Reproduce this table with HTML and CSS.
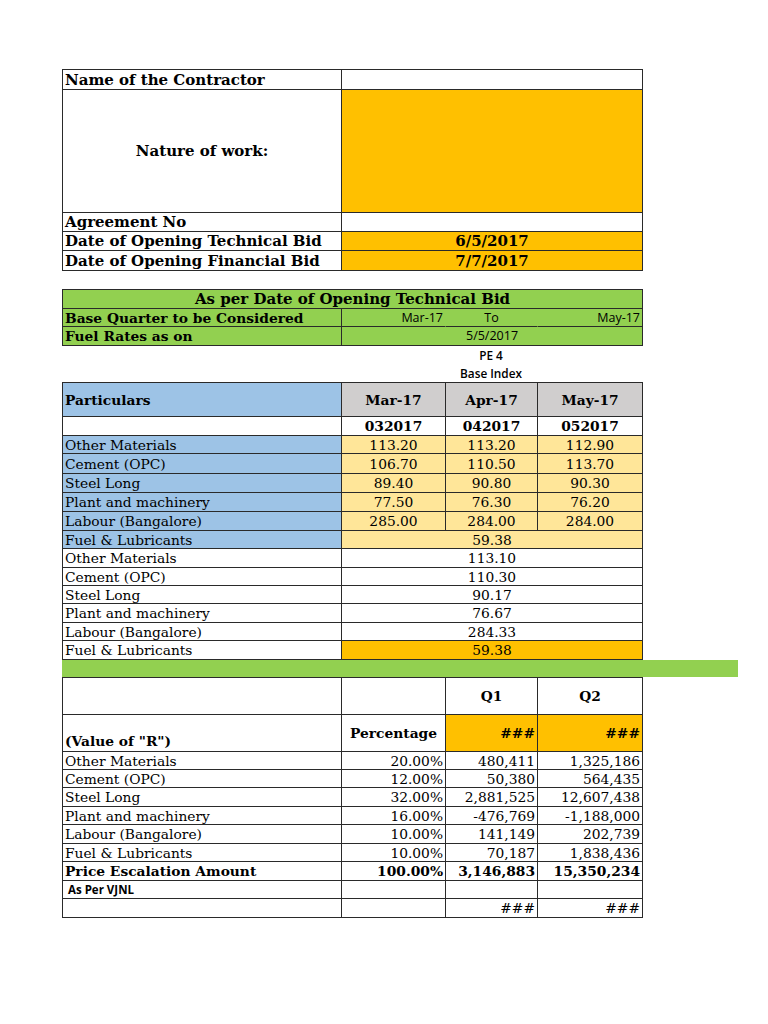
FILE: index.html
```html
<!DOCTYPE html>
<html>
<head>
<meta charset="utf-8">
<link rel="stylesheet" href="styles.css">
</head>
<body>
<div class="sheet">
  <table class="grid">
    <colgroup><col class="c1"><col class="c2"><col class="c3"><col class="c4"></colgroup>
    <tr class="h20"><td class="b big">Name of the Contractor</td><td colspan="3"></td></tr>
    <tr class="h123"><td class="b big ctr">Nature of work:</td><td colspan="3" class="orange"></td></tr>
    <tr class="h19"><td class="b big">Agreement No</td><td colspan="3"></td></tr>
    <tr class="h19"><td class="b big">Date of Opening Technical Bid</td><td colspan="3" class="orange b big ctr">6/5/2017</td></tr>
    <tr class="h20"><td class="b big">Date of Opening Financial Bid</td><td colspan="3" class="orange b big ctr">7/7/2017</td></tr>
  </table>

  <div class="gap"></div>

  <table class="grid">
    <colgroup><col class="c1"><col class="c2"><col class="c3"><col class="c4"></colgroup>
    <tr class="h19"><td colspan="4" class="b big ctr green">As per Date of Opening Technical Bid</td></tr>
    <tr class="h18"><td class="b green">Base Quarter to be Considered</td><td class="green sans r nr">Mar-17</td><td class="green sans ctr nr">To</td><td class="green sans r">May-17</td></tr>
    <tr class="h19"><td class="b green">Fuel Rates as on</td><td colspan="3" class="green sans ctr">5/5/2017</td></tr>
  </table>

  <div class="notes">
    <div class="note">PE 4</div>
    <div class="note">Base Index</div>
  </div>

  <table class="grid">
    <colgroup><col class="c1"><col class="c2"><col class="c3"><col class="c4"></colgroup>
    <tr class="h34"><td class="b blue">Particulars</td><td class="b ctr gray">Mar-17</td><td class="b ctr gray">Apr-17</td><td class="b ctr gray">May-17</td></tr>
    <tr class="h19"><td></td><td class="b ctr">032017</td><td class="b ctr">042017</td><td class="b ctr">052017</td></tr>
    <tr class="h18"><td class="blue">Other Materials</td><td class="ly ctr">113.20</td><td class="ly ctr">113.20</td><td class="ly ctr">112.90</td></tr>
    <tr class="h20"><td class="blue">Cement (OPC)</td><td class="ly ctr">106.70</td><td class="ly ctr">110.50</td><td class="ly ctr">113.70</td></tr>
    <tr class="h19"><td class="blue">Steel Long</td><td class="ly ctr">89.40</td><td class="ly ctr">90.80</td><td class="ly ctr">90.30</td></tr>
    <tr class="h19"><td class="blue">Plant and machinery</td><td class="ly ctr">77.50</td><td class="ly ctr">76.30</td><td class="ly ctr">76.20</td></tr>
    <tr class="h19"><td class="blue">Labour (Bangalore)</td><td class="ly ctr">285.00</td><td class="ly ctr">284.00</td><td class="ly ctr">284.00</td></tr>
    <tr class="h18"><td class="blue">Fuel &amp; Lubricants</td><td colspan="3" class="ly ctr">59.38</td></tr>
    <tr class="h19"><td>Other Materials</td><td colspan="3" class="ctr">113.10</td></tr>
    <tr class="h18"><td>Cement (OPC)</td><td colspan="3" class="ctr">110.30</td></tr>
    <tr class="h18"><td>Steel Long</td><td colspan="3" class="ctr">90.17</td></tr>
    <tr class="h19"><td>Plant and machinery</td><td colspan="3" class="ctr">76.67</td></tr>
    <tr class="h18"><td>Labour (Bangalore)</td><td colspan="3" class="ctr">284.33</td></tr>
    <tr class="h19"><td>Fuel &amp; Lubricants</td><td colspan="3" class="orange ctr">59.38</td></tr>
  </table>

  <div class="greenbar"></div>

  <table class="grid">
    <colgroup><col class="c1"><col class="c2"><col class="c3"><col class="c4"></colgroup>
    <tr class="h37"><td></td><td></td><td class="b ctr">Q1</td><td class="b ctr">Q2</td></tr>
    <tr class="h37"><td class="b bot">(Value of "R")</td><td class="b ctr">Percentage</td><td class="b r orange">###</td><td class="b r orange">###</td></tr>
    <tr class="h18"><td>Other Materials</td><td class="r">20.00%</td><td class="r">480,411</td><td class="r">1,325,186</td></tr>
    <tr class="h18"><td>Cement (OPC)</td><td class="r">12.00%</td><td class="r">50,380</td><td class="r">564,435</td></tr>
    <tr class="h19"><td>Steel Long</td><td class="r">32.00%</td><td class="r">2,881,525</td><td class="r">12,607,438</td></tr>
    <tr class="h18"><td>Plant and machinery</td><td class="r">16.00%</td><td class="r">-476,769</td><td class="r">-1,188,000</td></tr>
    <tr class="h19"><td>Labour (Bangalore)</td><td class="r">10.00%</td><td class="r">141,149</td><td class="r">202,739</td></tr>
    <tr class="h18"><td>Fuel &amp; Lubricants</td><td class="r">10.00%</td><td class="r">70,187</td><td class="r">1,838,436</td></tr>
    <tr class="h19"><td class="b">Price Escalation Amount</td><td class="b r">100.00%</td><td class="b r">3,146,883</td><td class="b r">15,350,234</td></tr>
    <tr class="h18"><td class="sans sb vj">As Per VJNL</td><td></td><td></td><td></td></tr>
    <tr class="h19"><td></td><td></td><td class="r">###</td><td class="r">###</td></tr>
  </table>
</div>
</body>
</html>
```

FILE: styles.css
```css
html, body {
  margin: 0;
  padding: 0;
  background: #ffffff;
}

.sheet {
  padding: 69px 0 0 62px;
  font-family: "DejaVu Serif", serif;
  font-size: 13.8px;
  color: #000;
}

.grid {
  border-collapse: separate;
  border-spacing: 0;
  table-layout: fixed;
  width: 581px;
  border-top: 1px solid #2a2a2a;
  border-left: 1px solid #2a2a2a;
}

.c1 { width: 279px; }
.c2 { width: 104px; }
.c3 { width: 92px; }
.c4 { width: 105px; }

.grid td {
  box-sizing: border-box;
  border: 0;
  border-right: 1px solid #2a2a2a;
  border-bottom: 1px solid #2a2a2a;
  padding: 0 2px;
  line-height: 14px;
  vertical-align: middle;
  white-space: nowrap;
  overflow: hidden;
}

.h18 { height: 18px; }
.h19 { height: 19px; }
.h20 { height: 20px; }
.h34 { height: 34px; }
.h37 { height: 37px; }
.h123 { height: 123px; }

.b { font-weight: bold; }
.big { font-size: 15px; }
.ctr { text-align: center; }
.r { text-align: right; }
.grid td.bot { vertical-align: bottom; padding-bottom: 3px; }

.orange { background: #ffc000; }
.green { background: #92d050; }
.blue { background: #9dc3e6; }
.gray { background: #d0cece; }
.ly { background: #ffe699; }

.sans {
  font-family: "Open Sans", "Noto Sans", sans-serif;
  font-size: 12.5px;
}
.sb { font-weight: bold; font-size: 11.5px; }
.grid td.vj { padding-left: 5px; }

.grid td.nr { border-right-color: transparent; }

.gap { height: 18px; }

.notes {
  height: 36px;
  margin-left: 383px;
  width: 92px;
  font-family: "Open Sans", "Noto Sans", sans-serif;
  font-size: 11.8px;
  font-weight: 600;
  text-align: center;
}
.note {
  height: 18px;
  line-height: 18px;
}

.greenbar {
  width: 676px;
  height: 17px;
  background: #92d050;
}
```
